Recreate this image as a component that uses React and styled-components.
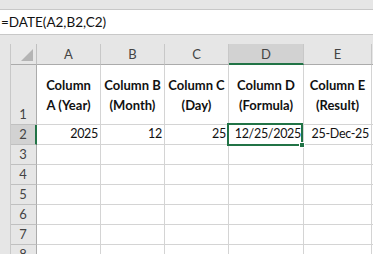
import React from 'react';
import styled, { createGlobalStyle } from 'styled-components';

const Global = createGlobalStyle`
  html, body { margin: 0; padding: 0; background: #e6e6e6; }
  body { font-family: Lato, "Open Sans", sans-serif; }
  * { box-sizing: border-box; }
`;

const Window = styled.div`
  width: 373px;
  height: 254px;
  overflow: hidden;
  background: #e6e6e6;
  display: flex;
  flex-direction: column;
`;

const TopBand = styled.div`
  height: 10px;
  flex: none;
  border-bottom: 1px solid #c8c8c8;
`;

const FormulaBar = styled.div`
  height: 25px;
  flex: none;
  background: #fff;
  border-bottom: 1px solid #c8c8c8;
  display: flex;
  align-items: center;
  padding: 0 0 1px 1px;
  font-size: 13.5px;
  color: #111;
  white-space: nowrap;
`;

const Gap = styled.div`
  height: 9px;
  flex: none;
`;

const SheetArea = styled.div`
  display: flex;
  flex: 1;
  min-height: 0;
`;

const LeftStrip = styled.div`
  width: 11px;
  flex: none;
  border-right: 1px solid #c8c8c8;
`;

const Grid = styled.div`
  display: grid;
  grid-template-columns: 26px 64px 64px 64px 75px 68px 40px;
  grid-template-rows: 21px 60px repeat(8, 20px);
  align-content: start;
  background: #fff;
`;

const Corner = styled.div`
  background: #e6e6e6;
  border-right: 1px solid #c0c0c0;
  border-bottom: 1px solid #ababab;
  display: flex;
  align-items: flex-end;
  justify-content: flex-end;
  padding: 0 3px 3px 0;
`;

const Triangle = styled.div`
  width: 0;
  height: 0;
  border-left: 12px solid transparent;
  border-bottom: 12px solid #b4b4b4;
`;

const ColHead = styled.div`
  background: ${p => (p.$active ? '#d2d2d2' : '#e6e6e6')};
  border-right: 1px solid #c8c8c8;
  border-bottom: ${p => (p.$active ? '2px solid #217346' : '1px solid #ababab')};
  display: flex;
  align-items: center;
  justify-content: center;
  padding-bottom: ${p => (p.$active ? '0' : '1px')};
  font-size: 13px;
  color: #444;
`;

const RowHead = styled.div`
  background: ${p => (p.$active ? '#d2d2d2' : '#e6e6e6')};
  border-right: ${p => (p.$active ? '2px solid #217346' : '1px solid #ababab')};
  border-bottom: 1px solid #c0c0c0;
  display: flex;
  align-items: flex-end;
  justify-content: center;
  padding: 0 ${p => (p.$active ? '0' : '1px')} 2px 0;
  font-size: 13px;
  line-height: 16px;
  color: #444;
`;

const Cell = styled.div`
  position: relative;
  border-right: 1px solid #d4d4d4;
  border-bottom: 1px solid #d4d4d4;
  display: flex;
  flex-direction: column;
  align-items: ${p => (p.$head ? 'center' : 'flex-end')};
  justify-content: flex-end;
  padding: ${p => (p.$head ? '0 0 9px 0' : '0 2px 2px 0')};
  font-size: ${p => (p.$head ? '13px' : '12.5px')};
  letter-spacing: ${p => (p.$head ? '0' : '-0.3px')};
  font-weight: ${p => (p.$head ? 700 : 400)};
  line-height: ${p => (p.$head ? '20px' : '16px')};
  color: #111;
  white-space: nowrap;
  text-align: center;
`;

const Selection = styled.div`
  position: absolute;
  left: -2px;
  top: -2px;
  right: 0;
  bottom: -2px;
  border: 2px solid #217346;
  pointer-events: none;
  z-index: 2;
`;

const Handle = styled.div`
  position: absolute;
  right: -4px;
  bottom: -4px;
  width: 6px;
  height: 6px;
  background: #217346;
  border: 1px solid #fff;
`;

const cols = ['A', 'B', 'C', 'D', 'E', ''];
const heads = [
  ['Column', 'A (Year)'],
  ['Column B', '(Month)'],
  ['Column C', '(Day)'],
  ['Column D', '(Formula)'],
  ['Column E', '(Result)'],
  null,
];
const data = ['2025', '12', '25', '12/25/2025', '25-Dec-25', ''];

export default function App() {
  return (
    <>
      <Global />
      <Window>
        <TopBand />
        <FormulaBar>=DATE(A2,B2,C2)</FormulaBar>
        <Gap />
        <SheetArea>
          <LeftStrip />
          <Grid>
            <Corner>
              <Triangle />
            </Corner>
            {cols.map((c, i) => (
              <ColHead key={'h' + i} $active={c === 'D'}>
                {c}
              </ColHead>
            ))}

            <RowHead>1</RowHead>
            {heads.map((h, i) => (
              <Cell key={'r1' + i} $head>
                {h && (
                  <>
                    <span>{h[0]}</span>
                    <span>{h[1]}</span>
                  </>
                )}
              </Cell>
            ))}

            <RowHead $active>2</RowHead>
            {data.map((d, i) => (
              <Cell key={'r2' + i}>
                {d}
                {i === 3 && (
                  <Selection>
                    <Handle />
                  </Selection>
                )}
              </Cell>
            ))}

            {[3, 4, 5, 6, 7, 8].map(r => (
              <React.Fragment key={r}>
                <RowHead>{r}</RowHead>
                {cols.map((c, i) => (
                  <Cell key={r + '-' + i} />
                ))}
              </React.Fragment>
            ))}
          </Grid>
        </SheetArea>
      </Window>
    </>
  );
}
